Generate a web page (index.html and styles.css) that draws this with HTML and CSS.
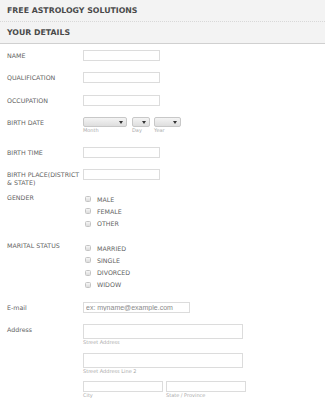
FILE: index.html
```html
<!DOCTYPE html>
<html lang="en">
  <head>
    <meta charset="UTF-8" />
    <meta name="viewport" content="width=device-width, initial-scale=1" />
    <title>Free Astrology Solutions</title>
    <link rel="stylesheet" href="styles.css">
  </head>
  <body>
    <div class="header header-top">FREE ASTROLOGY SOLUTIONS</div>
    <div class="header header-sub">YOUR DETAILS</div>

    <form class="form">
      <div class="row">
        <label class="row-label" for="name">NAME</label>
        <div class="field"><input type="text" id="name" class="text-input" /></div>
      </div>
      <div class="row row-gap-12">
        <label class="row-label" for="qualification">QUALIFICATION</label>
        <div class="field"><input type="text" id="qualification" class="text-input" /></div>
      </div>
      <div class="row">
        <label class="row-label" for="occupation">OCCUPATION</label>
        <div class="field"><input type="text" id="occupation" class="text-input" /></div>
      </div>
      <div class="row row-date">
        <label class="row-label">BIRTH DATE</label>
        <div class="field date-group">
          <div class="date-part">
            <div class="select select-month"><span class="arrow"></span></div>
            <span class="sublabel">Month</span>
          </div>
          <div class="date-part">
            <div class="select select-day"><span class="arrow"></span></div>
            <span class="sublabel">Day</span>
          </div>
          <div class="date-part">
            <div class="select select-year"><span class="arrow"></span></div>
            <span class="sublabel">Year</span>
          </div>
        </div>
      </div>
      <div class="row">
        <label class="row-label" for="birthTime">BIRTH TIME</label>
        <div class="field"><input type="text" id="birthTime" class="text-input" /></div>
      </div>
      <div class="row row-place">
        <label class="row-label" for="birthPlace">BIRTH PLACE(DISTRICT &amp; STATE)</label>
        <div class="field"><input type="text" id="birthPlace" class="text-input" /></div>
      </div>
      <div class="row row-gender">
        <label class="row-label">GENDER</label>
        <div class="field options">
          <label class="option"><span class="check"></span>MALE</label>
          <label class="option"><span class="check"></span>FEMALE</label>
          <label class="option"><span class="check"></span>OTHER</label>
        </div>
      </div>
      <div class="row row-marital">
        <label class="row-label">MARITAL STATUS</label>
        <div class="field options">
          <label class="option"><span class="check"></span>MARRIED</label>
          <label class="option"><span class="check"></span>SINGLE</label>
          <label class="option"><span class="check"></span>DIVORCED</label>
          <label class="option"><span class="check"></span>WIDOW</label>
        </div>
      </div>
      <div class="row">
        <label class="row-label" for="email">E-mail</label>
        <div class="field">
          <input type="text" id="email" class="text-input email-input" placeholder="ex: myname@example.com" />
        </div>
      </div>
      <div class="row">
        <label class="row-label" for="street1">Address</label>
        <div class="field address">
          <input type="text" id="street1" class="text-input address-input" />
          <span class="sublabel sublabel-address">Street Address</span>
          <input type="text" class="text-input address-input address-line2" />
          <span class="sublabel sublabel-address">Street Address Line 2</span>
          <div class="city-state">
            <div class="city-part">
              <input type="text" class="text-input half-input" />
              <span class="sublabel sublabel-address">City</span>
            </div>
            <div class="city-part">
              <input type="text" class="text-input half-input" />
              <span class="sublabel sublabel-address">State / Province</span>
            </div>
          </div>
        </div>
      </div>
    </form>
  </body>
</html>
```

FILE: styles.css
```css
:root {
  --font-default: 'DejaVu Sans', Verdana, sans-serif;
  --label-color: #5f5f5f;
  --border-color: #dcdcdc;
}
* {
  box-sizing: border-box;
}
html,
body {
  margin: 0;
  padding: 0;
  background: #fff;
  font-family: var(--font-default);
  color: var(--label-color);
}
.header {
  height: 22px;
  padding: 0 7px;
  background: #f3f3f3;
  font-size: 7.8px;
  font-weight: bold;
  line-height: 21px;
  color: #4a4a4a;
}
.header-top {
  border-bottom: 1px dotted #d8d8d8;
}
.header-sub {
  border-bottom: 1px solid #d0d0d0;
}
.form {
  padding: 6px 0 0 7px;
  margin: 0;
}
.row {
  display: grid;
  grid-template-columns: 76px 1fr;
  margin-bottom: 11px;
}
.row-gap-12 {
  margin-bottom: 12px;
}
.row-date {
  margin-bottom: 14px;
}
.row-place {
  margin-bottom: 5.5px;
}
.row-gender {
  margin-bottom: 11px;
}
.row-marital {
  margin-bottom: 11px;
}
.row-label {
  font-size: 6.3px;
  line-height: 8px;
  padding-top: 1.5px;
  color: var(--label-color);
}
.text-input {
  display: block;
  width: 77px;
  height: 11px;
  padding: 0 2px;
  margin: 0;
  border: 1px solid var(--border-color);
  border-radius: 0;
  background: #fff;
  font-family: 'Liberation Sans', Arial, sans-serif;
  font-size: 7px;
  outline: none;
}
.email-input {
  width: 107px;
}
.email-input::placeholder {
  color: #8a8a8a;
}
.address-input {
  width: 160px;
  height: 15px;
}
.half-input {
  width: 80px;
}
.sublabel {
  display: block;
  font-size: 5px;
  line-height: 6px;
  color: #aaa;
}
.sublabel-address {
  line-height: 7px;
}
.address-line2 {
  margin-top: 7px;
}
.city-state {
  display: flex;
  gap: 3px;
  margin-top: 6px;
}
.date-group {
  display: flex;
  gap: 4px;
}
.date-part:first-child {
  margin-right: 1px;
}
.select {
  position: relative;
  height: 10px;
  border: 1px solid #c8c8c8;
  border-radius: 2px;
  background: linear-gradient(#f4f4f4, #dedede);
}
.select-month {
  width: 44px;
}
.select-day {
  width: 18px;
}
.select-year {
  width: 27px;
}
.arrow {
  position: absolute;
  right: 3px;
  top: 3px;
  width: 0;
  height: 0;
  border-left: 2px solid transparent;
  border-right: 2px solid transparent;
  border-top: 3px solid #333;
}
.options {
  display: flex;
  flex-direction: column;
  padding-top: 1px;
}
.option {
  display: flex;
  align-items: center;
  height: 12.3px;
  padding-left: 2px;
  font-size: 6.3px;
  color: var(--label-color);
}
.check {
  width: 6px;
  height: 6px;
  margin-right: 6px;
  border: 1px solid #c4c4c4;
  border-radius: 1.5px;
  background: linear-gradient(#f6f6f6, #dcdcdc);
}
```
